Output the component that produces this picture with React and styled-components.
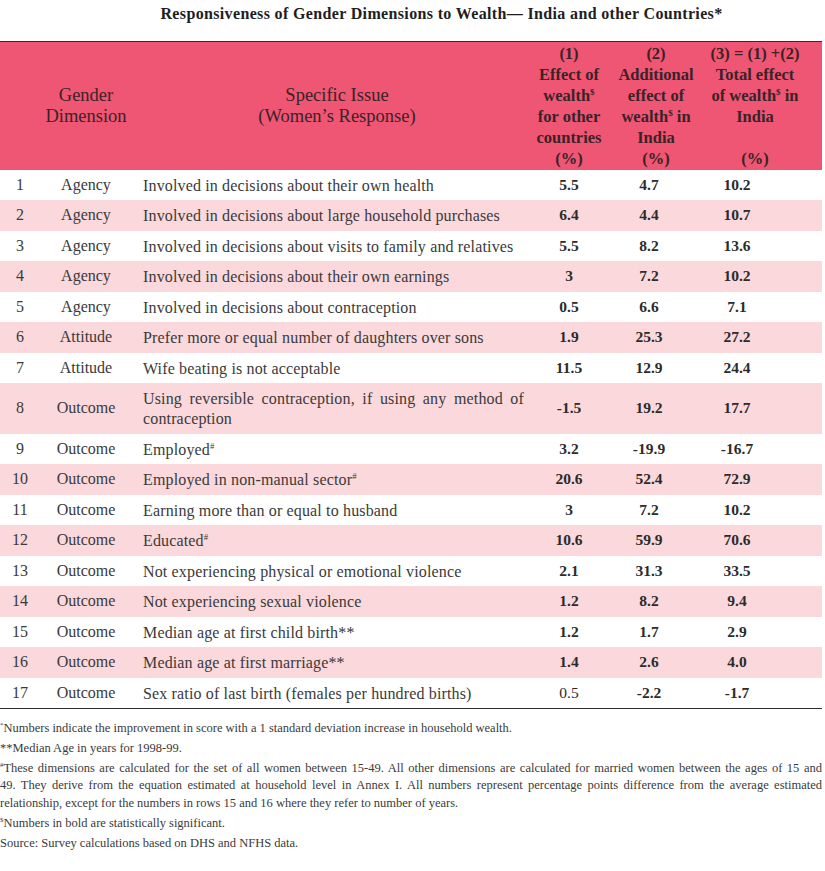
import React from "react";
import styled, { createGlobalStyle } from "styled-components";

const GlobalStyle = createGlobalStyle`
  html, body {
    margin: 0;
    padding: 0;
    background: #ffffff;
  }
  body {
    font-family: "Liberation Serif", "Times New Roman", serif;
    color: #333333;
  }
`;

const Page = styled.div`
  width: 825px;
  padding-top: 4px;
`;

const Title = styled.h1`
  margin: 0;
  padding-left: 58px;
  height: 37px;
  text-align: center;
  font-size: 16px;
  letter-spacing: 0.35px;
  line-height: 20px;
  font-weight: bold;
  color: #1e1e1e;
`;

const Table = styled.table`
  width: 822px;
  table-layout: fixed;
  border-collapse: collapse;
  border-top: 1.5px solid #3a2a2e;
  border-bottom: 1.5px solid #2e2e2e;
`;

const HeadRow = styled.tr`
  background: #ef5673;
  height: 128px;
`;

const HeadCell = styled.th`
  padding: 0 ${(p) => p.$pr || 0}px 0 ${(p) => p.$pl || 0}px;
  font-size: ${(p) => (p.$bold ? 16.5 : 18.5)}px;
  line-height: 21px;
  font-weight: ${(p) => (p.$bold ? "bold" : "normal")};
  color: #3b2228;
  text-align: center;
  vertical-align: middle;
  white-space: nowrap;
`;

const BodyRow = styled.tr`
  background: ${(p) => (p.$shaded ? "#fbd8db" : "#ffffff")};
  height: ${(p) => (p.$tall ? 50.5 : 30.5)}px;
`;

const Num = styled.td`
  text-align: center;
  font-size: 16px;
  color: #3a3a3a;
  padding: 0;
`;

const Dim = styled.td`
  text-align: center;
  font-size: 16px;
  color: #3a3a3a;
  padding: 0;
`;

const Issue = styled.td`
  font-size: 16px;
  letter-spacing: 0.15px;
  line-height: 20px;
  color: #3a3a3a;
  padding: 2px 6px 0 11px;
  text-align: justify;
`;

const Value = styled.td`
  text-align: center;
  font-size: 15.5px;
  font-weight: ${(p) => (p.$plain ? "normal" : "bold")};
  color: #2b2b2b;
  padding: 0 ${(p) => p.$pr || 0}px 0 0;
`;

const Sup = styled.sup`
  font-size: 0.55em;
  line-height: 0;
  vertical-align: 0.7em;
`;

const Notes = styled.div`
  padding-top: 11px;
  width: 822px;
`;

const Note = styled.p`
  margin: 0 0 2.5px;
  font-size: 12.5px;
  line-height: 17.5px;
  color: #3a3a3a;
`;

const NoteLine = styled.span`
  display: block;
  text-align: ${(p) => (p.$last ? "left" : "justify")};
  text-align-last: ${(p) => (p.$last ? "left" : "justify")};
`;

const rows = [
  [1, "Agency", "Involved in decisions about their own health", "5.5", "4.7", "10.2"],
  [2, "Agency", "Involved in decisions about large household purchases", "6.4", "4.4", "10.7"],
  [3, "Agency", "Involved in decisions about visits to family and relatives", "5.5", "8.2", "13.6"],
  [4, "Agency", "Involved in decisions about their own earnings", "3", "7.2", "10.2"],
  [5, "Agency", "Involved in decisions about contraception", "0.5", "6.6", "7.1"],
  [6, "Attitude", "Prefer more or equal number of daughters over sons", "1.9", "25.3", "27.2"],
  [7, "Attitude", "Wife beating is not acceptable", "11.5", "12.9", "24.4"],
  [8, "Outcome", "Using reversible contraception, if using any method of contraception", "-1.5", "19.2", "17.7"],
  [9, "Outcome", <>Employed<Sup>#</Sup></>, "3.2", "-19.9", "-16.7"],
  [10, "Outcome", <>Employed in non-manual sector<Sup>#</Sup></>, "20.6", "52.4", "72.9"],
  [11, "Outcome", "Earning more than or equal to husband", "3", "7.2", "10.2"],
  [12, "Outcome", <>Educated<Sup>#</Sup></>, "10.6", "59.9", "70.6"],
  [13, "Outcome", "Not experiencing physical or emotional violence", "2.1", "31.3", "33.5"],
  [14, "Outcome", "Not experiencing sexual violence", "1.2", "8.2", "9.4"],
  [15, "Outcome", "Median age at first child birth**", "1.2", "1.7", "2.9"],
  [16, "Outcome", "Median age at first marriage**", "1.4", "2.6", "4.0"],
  [17, "Outcome", "Sex ratio of last birth (females per hundred births)", "0.5", "-2.2", "-1.7"],
];

export default function App() {
  return (
    <Page>
      <GlobalStyle />
      <Title>Responsiveness of Gender Dimensions to Wealth— India and other Countries*</Title>
      <Table>
        <colgroup>
          <col style={{ width: 40 }} />
          <col style={{ width: 92 }} />
          <col style={{ width: 398 }} />
          <col style={{ width: 78 }} />
          <col style={{ width: 96 }} />
          <col style={{ width: 118 }} />
        </colgroup>
        <thead>
          <HeadRow>
            <HeadCell />
            <HeadCell>
              Gender
              <br />
              Dimension
            </HeadCell>
            <HeadCell $pl={12}>
              Specific Issue
              <br />
              (Women’s Response)
            </HeadCell>
            <HeadCell $bold>
              (1)
              <br />
              Effect of
              <br />
              wealth<Sup>$</Sup>
              <br />
              for other
              <br />
              countries
              <br />
              (%)
            </HeadCell>
            <HeadCell $bold>
              (2)
              <br />
              Additional
              <br />
              effect of
              <br />
              wealth<Sup>$</Sup> in
              <br />
              India
              <br />
              (%)
            </HeadCell>
            <HeadCell $bold $pr={16}>
              (3) = (1) +(2)
              <br />
              Total effect
              <br />
              of wealth<Sup>$</Sup> in
              <br />
              India
              <br />
              &nbsp;
              <br />
              (%)
            </HeadCell>
          </HeadRow>
        </thead>
        <tbody>
          {rows.map(([n, dim, issue, a, b, c], i) => (
            <BodyRow key={n} $shaded={i % 2 === 1} $tall={n === 8}>
              <Num>{n}</Num>
              <Dim>{dim}</Dim>
              <Issue>{issue}</Issue>
              <Value $plain={n === 17}>{a}</Value>
              <Value $pr={14}>{b}</Value>
              <Value $pr={52}>{c}</Value>
            </BodyRow>
          ))}
        </tbody>
      </Table>
      <Notes>
        <Note>
          <Sup>*</Sup>Numbers indicate the improvement in score with a 1 standard deviation increase in household wealth.
        </Note>
        <Note>**Median Age in years for 1998-99.</Note>
        <Note>
          <NoteLine>
            <Sup>#</Sup>These dimensions are calculated for the set of all women between 15-49. All other dimensions
            are calculated for married women between the ages of 15 and
          </NoteLine>
          <NoteLine>
            49. They derive from the equation estimated at household level in Annex I. All numbers represent
            percentage points difference from the average estimated
          </NoteLine>
          <NoteLine $last>
            relationship, except for the numbers in rows 15 and 16 where they refer to number of years.
          </NoteLine>
        </Note>
        <Note>
          <Sup>$</Sup>Numbers in bold are statistically significant.
        </Note>
        <Note>Source: Survey calculations based on DHS and NFHS data.</Note>
      </Notes>
    </Page>
  );
}
